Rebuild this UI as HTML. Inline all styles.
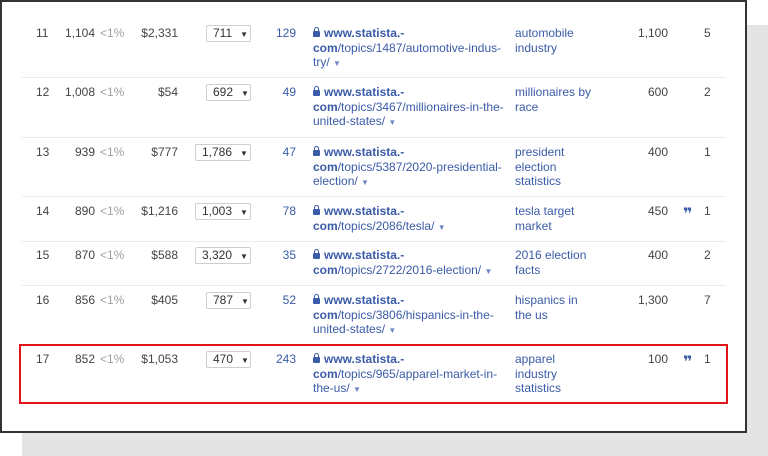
<!DOCTYPE html>
<html><head><style>
body{margin:0;width:768px;height:456px;background:#fff;position:relative;overflow:hidden;font-family:"Liberation Sans",sans-serif;font-size:12px;color:#444;}
.shadow{position:absolute;left:22px;top:25px;width:746px;height:431px;background:#e4e4e4;}
.panel{position:absolute;left:0;top:0;width:743px;height:429px;background:#fff;border:2px solid #333;}
.a{position:absolute;line-height:14.7px;white-space:nowrap;}
.r{text-align:right;}
.b{color:#3a5ba8;}
.g{color:#a0a0a0;}
.sel{position:absolute;height:17px;border:1px solid #cfcfcf;border-radius:2px;box-sizing:border-box;line-height:15px;padding:0 6px;color:#333;}
.sel span{font-size:8px;margin-left:8px;}
.sep{position:absolute;left:22px;width:704px;height:1px;background:#ececec;}
.lk{display:inline-block;width:7px;height:6px;background:#3a5ba8;border-radius:1px;position:relative;margin-right:4px;vertical-align:0px}
.lk:before{content:"";position:absolute;left:1px;top:-4px;width:3px;height:4px;border:1px solid #3a5ba8;border-bottom:none;border-radius:3px 3px 0 0;}
.tri{font-size:8px;color:#6f87c2;}
.q{position:absolute;color:#3a5ba8;font-size:16px;line-height:16px;font-weight:bold;font-family:"DejaVu Sans",sans-serif;}
.red{position:absolute;left:19px;top:344px;width:709px;height:60px;border:2px solid #e0141a;box-sizing:border-box;}
</style></head><body>
<div class="shadow"></div>
<div class="panel"></div>
<div class="sep" style="top:77px"></div>
<div class="sep" style="top:137px"></div>
<div class="sep" style="top:196px"></div>
<div class="sep" style="top:241px"></div>
<div class="sep" style="top:285px"></div>
<div class="red"></div>

<div class="a" style="left:36px;top:26px">11</div><div class="a r" style="left:50px;width:45px;top:26px">1,104</div><div class="a g" style="left:100px;top:26px">&lt;1%</div><div class="a r" style="left:130px;width:48px;top:26px">$2,331</div><div class="sel" style="left:206px;width:45px;top:25px">711<span>▼</span></div><div class="a r b" style="left:260px;width:36px;top:26px">129</div>
<div class="a b" style="left:313px;top:26px"><span class="lk"></span><b>www.statista.-</b><br><b>com</b>/topics/1487/automotive-indus-<br>try/ <span class="tri">▼</span></div>
<div class="a b" style="left:515px;top:26px">automobile<br>industry</div><div class="a r" style="left:620px;width:48px;top:26px">1,100</div><div class="a" style="left:704px;top:26px">5</div>

<div class="a" style="left:36px;top:85px">12</div><div class="a r" style="left:50px;width:45px;top:85px">1,008</div><div class="a g" style="left:100px;top:85px">&lt;1%</div><div class="a r" style="left:130px;width:48px;top:85px">$54</div><div class="sel" style="left:206px;width:45px;top:84px">692<span>▼</span></div><div class="a r b" style="left:260px;width:36px;top:85px">49</div>
<div class="a b" style="left:313px;top:85px"><span class="lk"></span><b>www.statista.-</b><br><b>com</b>/topics/3467/millionaires-in-the-<br>united-states/ <span class="tri">▼</span></div>
<div class="a b" style="left:515px;top:85px">millionaires by<br>race</div><div class="a r" style="left:620px;width:48px;top:85px">600</div><div class="a" style="left:704px;top:85px">2</div>

<div class="a" style="left:36px;top:145px">13</div><div class="a r" style="left:50px;width:45px;top:145px">939</div><div class="a g" style="left:100px;top:145px">&lt;1%</div><div class="a r" style="left:130px;width:48px;top:145px">$777</div><div class="sel" style="left:195px;width:56px;top:144px">1,786<span>▼</span></div><div class="a r b" style="left:260px;width:36px;top:145px">47</div>
<div class="a b" style="left:313px;top:145px"><span class="lk"></span><b>www.statista.-</b><br><b>com</b>/topics/5387/2020-presidential-<br>election/ <span class="tri">▼</span></div>
<div class="a b" style="left:515px;top:145px">president<br>election<br>statistics</div><div class="a r" style="left:620px;width:48px;top:145px">400</div><div class="a" style="left:704px;top:145px">1</div>

<div class="a" style="left:36px;top:204px">14</div><div class="a r" style="left:50px;width:45px;top:204px">890</div><div class="a g" style="left:100px;top:204px">&lt;1%</div><div class="a r" style="left:130px;width:48px;top:204px">$1,216</div><div class="sel" style="left:195px;width:56px;top:203px">1,003<span>▼</span></div><div class="a r b" style="left:260px;width:36px;top:204px">78</div>
<div class="a b" style="left:313px;top:204px"><span class="lk"></span><b>www.statista.-</b><br><b>com</b>/topics/2086/tesla/ <span class="tri">▼</span></div>
<div class="a b" style="left:515px;top:204px">tesla target<br>market</div><div class="a r" style="left:620px;width:48px;top:204px">450</div><div class="q" style="left:683px;top:206px">❞</div><div class="a" style="left:704px;top:204px">1</div>

<div class="a" style="left:36px;top:248px">15</div><div class="a r" style="left:50px;width:45px;top:248px">870</div><div class="a g" style="left:100px;top:248px">&lt;1%</div><div class="a r" style="left:130px;width:48px;top:248px">$588</div><div class="sel" style="left:195px;width:56px;top:247px">3,320<span>▼</span></div><div class="a r b" style="left:260px;width:36px;top:248px">35</div>
<div class="a b" style="left:313px;top:248px"><span class="lk"></span><b>www.statista.-</b><br><b>com</b>/topics/2722/2016-election/ <span class="tri">▼</span></div>
<div class="a b" style="left:515px;top:248px">2016 election<br>facts</div><div class="a r" style="left:620px;width:48px;top:248px">400</div><div class="a" style="left:704px;top:248px">2</div>

<div class="a" style="left:36px;top:293px">16</div><div class="a r" style="left:50px;width:45px;top:293px">856</div><div class="a g" style="left:100px;top:293px">&lt;1%</div><div class="a r" style="left:130px;width:48px;top:293px">$405</div><div class="sel" style="left:206px;width:45px;top:292px">787<span>▼</span></div><div class="a r b" style="left:260px;width:36px;top:293px">52</div>
<div class="a b" style="left:313px;top:293px"><span class="lk"></span><b>www.statista.-</b><br><b>com</b>/topics/3806/hispanics-in-the-<br>united-states/ <span class="tri">▼</span></div>
<div class="a b" style="left:515px;top:293px">hispanics in<br>the us</div><div class="a r" style="left:620px;width:48px;top:293px">1,300</div><div class="a" style="left:704px;top:293px">7</div>

<div class="a" style="left:36px;top:352px">17</div><div class="a r" style="left:50px;width:45px;top:352px">852</div><div class="a g" style="left:100px;top:352px">&lt;1%</div><div class="a r" style="left:130px;width:48px;top:352px">$1,053</div><div class="sel" style="left:206px;width:45px;top:351px">470<span>▼</span></div><div class="a r b" style="left:260px;width:36px;top:352px">243</div>
<div class="a b" style="left:313px;top:352px"><span class="lk"></span><b>www.statista.-</b><br><b>com</b>/topics/965/apparel-market-in-<br>the-us/ <span class="tri">▼</span></div>
<div class="a b" style="left:515px;top:352px">apparel<br>industry<br>statistics</div><div class="a r" style="left:620px;width:48px;top:352px">100</div><div class="q" style="left:683px;top:354px">❞</div><div class="a" style="left:704px;top:352px">1</div>
</body></html>
